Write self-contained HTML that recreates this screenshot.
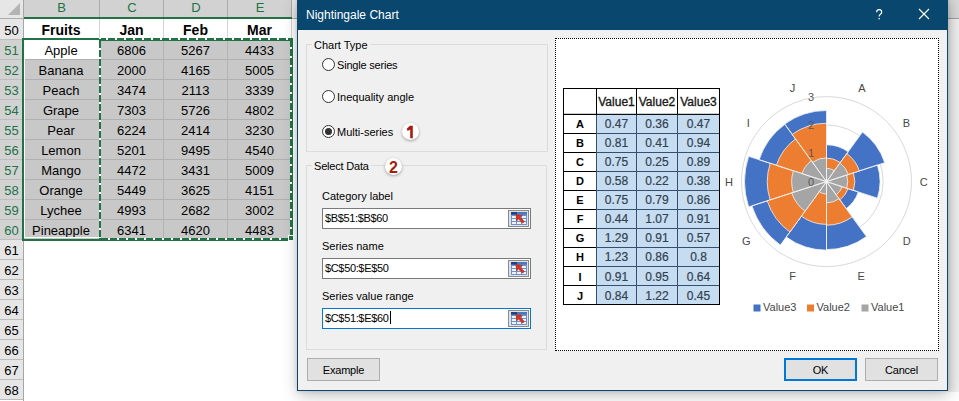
<!DOCTYPE html><html><head><meta charset="utf-8"><style>
*{margin:0;padding:0;box-sizing:border-box}
html,body{width:959px;height:401px;overflow:hidden;background:#fff;font-family:"Liberation Sans", sans-serif}
.a{position:absolute}
.xl{font-size:13px;color:#000;text-align:center;line-height:23px}
.rh{font-size:13px;text-align:center;line-height:23px}
.dt{font-size:11px;color:#000;white-space:nowrap}
</style></head><body>
<div class="a" style="left:0;top:0;width:959px;height:19px;background:#e6e6e6;border-bottom:1px solid #ababab"></div>
<svg class="a" style="left:0;top:0" width="23" height="18"><polygon points="20,3 20,15 8,15" fill="#b4b4b4"/></svg>
<div class="a" style="left:23px;top:0;width:77px;height:17px;background:#d2d2d2;border-right:1px solid #ababab"></div>
<div class="a rh" style="left:23px;top:-1px;width:77px;height:17px;color:#217346;line-height:18.5px;font-size:13px">B</div>
<div class="a" style="left:100px;top:0;width:64px;height:17px;background:#d2d2d2;border-right:1px solid #ababab"></div>
<div class="a rh" style="left:100px;top:-1px;width:64px;height:17px;color:#217346;line-height:18.5px;font-size:13px">C</div>
<div class="a" style="left:164px;top:0;width:64px;height:17px;background:#d2d2d2;border-right:1px solid #ababab"></div>
<div class="a rh" style="left:164px;top:-1px;width:64px;height:17px;color:#217346;line-height:18.5px;font-size:13px">D</div>
<div class="a" style="left:228px;top:0;width:64px;height:17px;background:#d2d2d2;border-right:1px solid #ababab"></div>
<div class="a rh" style="left:228px;top:-1px;width:64px;height:17px;color:#217346;line-height:18.5px;font-size:13px">E</div>
<div class="a" style="left:23px;top:17px;width:269px;height:2px;background:#217346"></div>
<div class="a rh" style="left:0;top:19px;width:23px;height:21px;background:#e6e6e6;border-bottom:1px solid #bdbdbd;color:#000;line-height:23px">50</div>
<div class="a rh" style="left:0;top:40px;width:23px;height:20px;background:#d2d2d2;border-bottom:1px solid #bdbdbd;color:#217346;line-height:21px">51</div>
<div class="a rh" style="left:0;top:60px;width:23px;height:20px;background:#d2d2d2;border-bottom:1px solid #bdbdbd;color:#217346;line-height:21px">52</div>
<div class="a rh" style="left:0;top:80px;width:23px;height:20px;background:#d2d2d2;border-bottom:1px solid #bdbdbd;color:#217346;line-height:21px">53</div>
<div class="a rh" style="left:0;top:100px;width:23px;height:20px;background:#d2d2d2;border-bottom:1px solid #bdbdbd;color:#217346;line-height:21px">54</div>
<div class="a rh" style="left:0;top:120px;width:23px;height:20px;background:#d2d2d2;border-bottom:1px solid #bdbdbd;color:#217346;line-height:21px">55</div>
<div class="a rh" style="left:0;top:140px;width:23px;height:20px;background:#d2d2d2;border-bottom:1px solid #bdbdbd;color:#217346;line-height:21px">56</div>
<div class="a rh" style="left:0;top:160px;width:23px;height:20px;background:#d2d2d2;border-bottom:1px solid #bdbdbd;color:#217346;line-height:21px">57</div>
<div class="a rh" style="left:0;top:180px;width:23px;height:20px;background:#d2d2d2;border-bottom:1px solid #bdbdbd;color:#217346;line-height:21px">58</div>
<div class="a rh" style="left:0;top:200px;width:23px;height:20px;background:#d2d2d2;border-bottom:1px solid #bdbdbd;color:#217346;line-height:21px">59</div>
<div class="a rh" style="left:0;top:220px;width:23px;height:20px;background:#d2d2d2;border-bottom:1px solid #bdbdbd;color:#217346;line-height:21px">60</div>
<div class="a rh" style="left:0;top:240px;width:23px;height:20px;background:#e6e6e6;border-bottom:1px solid #bdbdbd;color:#000;line-height:21px">61</div>
<div class="a rh" style="left:0;top:260px;width:23px;height:20px;background:#e6e6e6;border-bottom:1px solid #bdbdbd;color:#000;line-height:21px">62</div>
<div class="a rh" style="left:0;top:280px;width:23px;height:20px;background:#e6e6e6;border-bottom:1px solid #bdbdbd;color:#000;line-height:21px">63</div>
<div class="a rh" style="left:0;top:300px;width:23px;height:20px;background:#e6e6e6;border-bottom:1px solid #bdbdbd;color:#000;line-height:21px">64</div>
<div class="a rh" style="left:0;top:320px;width:23px;height:20px;background:#e6e6e6;border-bottom:1px solid #bdbdbd;color:#000;line-height:21px">65</div>
<div class="a rh" style="left:0;top:340px;width:23px;height:20px;background:#e6e6e6;border-bottom:1px solid #bdbdbd;color:#000;line-height:21px">66</div>
<div class="a rh" style="left:0;top:360px;width:23px;height:20px;background:#e6e6e6;border-bottom:1px solid #bdbdbd;color:#000;line-height:21px">67</div>
<div class="a rh" style="left:0;top:380px;width:23px;height:20px;background:#e6e6e6;border-bottom:1px solid #bdbdbd;color:#000;line-height:21px">68</div>
<div class="a" style="left:23px;top:0;width:1px;height:401px;background:#a6a6a6"></div>
<div class="a" style="left:24px;top:19px;width:268px;height:21px;background:#fff"></div>
<div class="a xl" style="left:23px;top:19px;width:77px;height:21px;font-weight:bold;font-size:14px;border-right:1px solid #d4d4d4">Fruits</div>
<div class="a xl" style="left:100px;top:19px;width:64px;height:21px;font-weight:bold;font-size:14px;border-right:1px solid #d4d4d4">Jan</div>
<div class="a xl" style="left:164px;top:19px;width:64px;height:21px;font-weight:bold;font-size:14px;border-right:1px solid #d4d4d4">Feb</div>
<div class="a xl" style="left:228px;top:19px;width:64px;height:21px;font-weight:bold;font-size:14px;border-right:1px solid #d4d4d4">Mar</div>
<div class="a xl" style="left:23px;top:40px;width:77px;height:20px;background:#fff;border-right:1px solid #b4b4b4;border-bottom:1px solid #b0b0b0;line-height:21px">Apple</div>
<div class="a xl" style="left:100px;top:40px;width:64px;height:20px;background:#c8c8c8;border-right:1px solid #b4b4b4;border-bottom:1px solid #b0b0b0;line-height:21px">6806</div>
<div class="a xl" style="left:164px;top:40px;width:64px;height:20px;background:#c8c8c8;border-right:1px solid #b4b4b4;border-bottom:1px solid #b0b0b0;line-height:21px">5267</div>
<div class="a xl" style="left:228px;top:40px;width:64px;height:20px;background:#c8c8c8;border-right:1px solid #b4b4b4;border-bottom:1px solid #b0b0b0;line-height:21px">4433</div>
<div class="a xl" style="left:23px;top:60px;width:77px;height:20px;background:#c8c8c8;border-right:1px solid #b4b4b4;border-bottom:1px solid #b0b0b0;line-height:21px">Banana</div>
<div class="a xl" style="left:100px;top:60px;width:64px;height:20px;background:#c8c8c8;border-right:1px solid #b4b4b4;border-bottom:1px solid #b0b0b0;line-height:21px">2000</div>
<div class="a xl" style="left:164px;top:60px;width:64px;height:20px;background:#c8c8c8;border-right:1px solid #b4b4b4;border-bottom:1px solid #b0b0b0;line-height:21px">4165</div>
<div class="a xl" style="left:228px;top:60px;width:64px;height:20px;background:#c8c8c8;border-right:1px solid #b4b4b4;border-bottom:1px solid #b0b0b0;line-height:21px">5005</div>
<div class="a xl" style="left:23px;top:80px;width:77px;height:20px;background:#c8c8c8;border-right:1px solid #b4b4b4;border-bottom:1px solid #b0b0b0;line-height:21px">Peach</div>
<div class="a xl" style="left:100px;top:80px;width:64px;height:20px;background:#c8c8c8;border-right:1px solid #b4b4b4;border-bottom:1px solid #b0b0b0;line-height:21px">3474</div>
<div class="a xl" style="left:164px;top:80px;width:64px;height:20px;background:#c8c8c8;border-right:1px solid #b4b4b4;border-bottom:1px solid #b0b0b0;line-height:21px">2113</div>
<div class="a xl" style="left:228px;top:80px;width:64px;height:20px;background:#c8c8c8;border-right:1px solid #b4b4b4;border-bottom:1px solid #b0b0b0;line-height:21px">3339</div>
<div class="a xl" style="left:23px;top:100px;width:77px;height:20px;background:#c8c8c8;border-right:1px solid #b4b4b4;border-bottom:1px solid #b0b0b0;line-height:21px">Grape</div>
<div class="a xl" style="left:100px;top:100px;width:64px;height:20px;background:#c8c8c8;border-right:1px solid #b4b4b4;border-bottom:1px solid #b0b0b0;line-height:21px">7303</div>
<div class="a xl" style="left:164px;top:100px;width:64px;height:20px;background:#c8c8c8;border-right:1px solid #b4b4b4;border-bottom:1px solid #b0b0b0;line-height:21px">5726</div>
<div class="a xl" style="left:228px;top:100px;width:64px;height:20px;background:#c8c8c8;border-right:1px solid #b4b4b4;border-bottom:1px solid #b0b0b0;line-height:21px">4802</div>
<div class="a xl" style="left:23px;top:120px;width:77px;height:20px;background:#c8c8c8;border-right:1px solid #b4b4b4;border-bottom:1px solid #b0b0b0;line-height:21px">Pear</div>
<div class="a xl" style="left:100px;top:120px;width:64px;height:20px;background:#c8c8c8;border-right:1px solid #b4b4b4;border-bottom:1px solid #b0b0b0;line-height:21px">6224</div>
<div class="a xl" style="left:164px;top:120px;width:64px;height:20px;background:#c8c8c8;border-right:1px solid #b4b4b4;border-bottom:1px solid #b0b0b0;line-height:21px">2414</div>
<div class="a xl" style="left:228px;top:120px;width:64px;height:20px;background:#c8c8c8;border-right:1px solid #b4b4b4;border-bottom:1px solid #b0b0b0;line-height:21px">3230</div>
<div class="a xl" style="left:23px;top:140px;width:77px;height:20px;background:#c8c8c8;border-right:1px solid #b4b4b4;border-bottom:1px solid #b0b0b0;line-height:21px">Lemon</div>
<div class="a xl" style="left:100px;top:140px;width:64px;height:20px;background:#c8c8c8;border-right:1px solid #b4b4b4;border-bottom:1px solid #b0b0b0;line-height:21px">5201</div>
<div class="a xl" style="left:164px;top:140px;width:64px;height:20px;background:#c8c8c8;border-right:1px solid #b4b4b4;border-bottom:1px solid #b0b0b0;line-height:21px">9495</div>
<div class="a xl" style="left:228px;top:140px;width:64px;height:20px;background:#c8c8c8;border-right:1px solid #b4b4b4;border-bottom:1px solid #b0b0b0;line-height:21px">4540</div>
<div class="a xl" style="left:23px;top:160px;width:77px;height:20px;background:#c8c8c8;border-right:1px solid #b4b4b4;border-bottom:1px solid #b0b0b0;line-height:21px">Mango</div>
<div class="a xl" style="left:100px;top:160px;width:64px;height:20px;background:#c8c8c8;border-right:1px solid #b4b4b4;border-bottom:1px solid #b0b0b0;line-height:21px">4472</div>
<div class="a xl" style="left:164px;top:160px;width:64px;height:20px;background:#c8c8c8;border-right:1px solid #b4b4b4;border-bottom:1px solid #b0b0b0;line-height:21px">3431</div>
<div class="a xl" style="left:228px;top:160px;width:64px;height:20px;background:#c8c8c8;border-right:1px solid #b4b4b4;border-bottom:1px solid #b0b0b0;line-height:21px">5009</div>
<div class="a xl" style="left:23px;top:180px;width:77px;height:20px;background:#c8c8c8;border-right:1px solid #b4b4b4;border-bottom:1px solid #b0b0b0;line-height:21px">Orange</div>
<div class="a xl" style="left:100px;top:180px;width:64px;height:20px;background:#c8c8c8;border-right:1px solid #b4b4b4;border-bottom:1px solid #b0b0b0;line-height:21px">5449</div>
<div class="a xl" style="left:164px;top:180px;width:64px;height:20px;background:#c8c8c8;border-right:1px solid #b4b4b4;border-bottom:1px solid #b0b0b0;line-height:21px">3625</div>
<div class="a xl" style="left:228px;top:180px;width:64px;height:20px;background:#c8c8c8;border-right:1px solid #b4b4b4;border-bottom:1px solid #b0b0b0;line-height:21px">4151</div>
<div class="a xl" style="left:23px;top:200px;width:77px;height:20px;background:#c8c8c8;border-right:1px solid #b4b4b4;border-bottom:1px solid #b0b0b0;line-height:21px">Lychee</div>
<div class="a xl" style="left:100px;top:200px;width:64px;height:20px;background:#c8c8c8;border-right:1px solid #b4b4b4;border-bottom:1px solid #b0b0b0;line-height:21px">4993</div>
<div class="a xl" style="left:164px;top:200px;width:64px;height:20px;background:#c8c8c8;border-right:1px solid #b4b4b4;border-bottom:1px solid #b0b0b0;line-height:21px">2682</div>
<div class="a xl" style="left:228px;top:200px;width:64px;height:20px;background:#c8c8c8;border-right:1px solid #b4b4b4;border-bottom:1px solid #b0b0b0;line-height:21px">3002</div>
<div class="a xl" style="left:23px;top:220px;width:77px;height:20px;background:#c8c8c8;border-right:1px solid #b4b4b4;border-bottom:1px solid #b0b0b0;line-height:21px">Pineapple</div>
<div class="a xl" style="left:100px;top:220px;width:64px;height:20px;background:#c8c8c8;border-right:1px solid #b4b4b4;border-bottom:1px solid #b0b0b0;line-height:21px">6341</div>
<div class="a xl" style="left:164px;top:220px;width:64px;height:20px;background:#c8c8c8;border-right:1px solid #b4b4b4;border-bottom:1px solid #b0b0b0;line-height:21px">4620</div>
<div class="a xl" style="left:228px;top:220px;width:64px;height:20px;background:#c8c8c8;border-right:1px solid #b4b4b4;border-bottom:1px solid #b0b0b0;line-height:21px">4483</div>
<div class="a" style="left:24px;top:40px;width:75px;height:198px;border-left:1px solid #fff;border-bottom:1px solid #fff"></div>
<div class="a" style="left:22px;top:38px;width:79px;height:203px;border:2px solid #217346"></div>
<div class="a" style="left:99px;top:38px;width:194px;height:3px;background:#217346"></div>
<div class="a" style="left:99px;top:38px;width:192px;height:2px;background:repeating-linear-gradient(90deg,transparent 0 7px,#fff 7px 9px)"></div>
<div class="a" style="left:99px;top:238px;width:194px;height:3px;background:#217346"></div>
<div class="a" style="left:101px;top:238px;width:188px;height:2px;background:repeating-linear-gradient(90deg,transparent 0 7px,#fff 7px 9px)"></div>
<div class="a" style="left:99px;top:38px;width:2px;height:200px;background:repeating-linear-gradient(180deg,#217346 0 7px,#fff 7px 9px);background-position:0 3px"></div>
<div class="a" style="left:290px;top:38px;width:3px;height:200px;background:#217346"></div>
<div class="a" style="left:290px;top:40px;width:2px;height:196px;background:repeating-linear-gradient(180deg,transparent 0 7px,#fff 7px 9px)"></div>
<div class="a" style="left:288px;top:235px;width:6px;height:6px;background:#217346;border:1px solid #fff"></div>
<div class="a" style="left:948px;top:19px;width:11px;height:382px;background:#fff"></div>
<div class="a" style="left:948px;top:0;width:11px;height:392px;background:linear-gradient(90deg,rgba(0,0,0,0.09),rgba(0,0,0,0.05))"></div>
<div class="a" style="left:297px;top:0;width:651px;height:391px;box-shadow:0 0 4px rgba(0,0,0,0.14), 1px 4px 15px rgba(0,0,0,0.26)"></div>
<div class="a" style="left:297px;top:0;width:651px;height:391px;background:#f0f0f0;border:1px solid #09476e;border-top:none"></div>
<div class="a" style="left:297px;top:0;width:651px;height:30px;background:#09476e"></div>
<div class="a" style="left:306px;top:7px;font-size:12px;color:#fff;white-space:nowrap;line-height:16px">Nightingale Chart</div>
<svg class="a" style="left:0;top:0" width="959" height="30"><path d="M876.6,12.2 Q876.6,9.6 879.2,9.6 Q881.7,9.6 881.7,12 Q881.7,13.5 880.2,14.4 Q879.1,15.1 879.1,16.6" fill="none" stroke="#fff" stroke-width="1.15"/><rect x="878.5" y="18" width="1.3" height="1.3" fill="#fff"/></svg>
<svg class="a" style="left:918px;top:8px" width="12" height="12"><path d="M1,1L11,11M11,1L1,11" stroke="#fff" stroke-width="1.1"/></svg>
<div class="a" style="left:306px;top:44px;width:242px;height:108px;border:1px solid #dcdcdc"></div>
<div class="a dt" style="left:312px;top:38px;padding:0 2px;background:#f0f0f0;line-height:14px">Chart Type</div>
<div class="a" style="left:306px;top:165px;width:241px;height:185px;border:1px solid #dcdcdc"></div>
<div class="a dt" style="left:312px;top:159px;padding:0 2px;background:#f0f0f0;line-height:14px;letter-spacing:-0.2px">Select Data</div>
<div class="a" style="left:322px;top:58.0px;width:13px;height:13px;border-radius:50%;border:1px solid #333;background:#fff"></div>
<div class="a dt" style="left:337px;top:57.5px;line-height:14px;letter-spacing:-0.2px">Single series</div>
<div class="a" style="left:322px;top:90.0px;width:13px;height:13px;border-radius:50%;border:1px solid #333;background:#fff"></div>
<div class="a dt" style="left:337px;top:89.5px;line-height:14px;letter-spacing:0px">Inequality angle</div>
<div class="a" style="left:322px;top:124.5px;width:13px;height:13px;border-radius:50%;border:1px solid #333;background:#fff"></div>
<div class="a" style="left:325px;top:127.5px;width:7px;height:7px;border-radius:50%;background:#333"></div>
<div class="a dt" style="left:337px;top:125px;line-height:14px;letter-spacing:0px">Multi-series</div>
<div class="a" style="left:401.6px;top:122.9px;width:17.4px;height:17.4px;border-radius:50%;background:#fff;box-shadow:0 1px 3px rgba(0,0,0,0.35)"></div>
<svg class="a" style="left:0;top:0" width="959" height="401"><path d="M409.9,125.8 L412.8,125.8 L412.8,138.2 L410.2,138.2 L410.2,129.4 L407.6,131.0 L406.8,128.8 Z" fill="#a81c10"/></svg>
<div class="a" style="left:384.6px;top:157.6px;width:17.4px;height:17.4px;border-radius:50%;background:#fff;box-shadow:0 1px 3px rgba(0,0,0,0.35)"></div>
<div class="a" style="left:383px;top:158px;width:21px;text-align:center;font-weight:bold;font-size:16px;line-height:19px;color:#a81c10">2</div>
<div class="a dt" style="left:322px;top:189px;line-height:14px">Category label</div>
<div class="a" style="left:322px;top:208px;width:209px;height:21px;background:#fff;border:1px solid #7a7a7a"></div>
<div class="a dt" style="left:325px;top:211px;line-height:14px;letter-spacing:-0.35px">$B$51:$B$60</div>
<div class="a" style="left:508px;top:210px;width:21px;height:17px;background:#e1e1e1;border:1px solid #8a8a8a"></div>
<svg class="a" style="left:511px;top:212px" width="16" height="13"><rect x="0" y="0" width="16" height="13" fill="#6d93cf"/><rect x="0" y="0" width="16" height="2.5" fill="#4a78c0"/><rect x="0" y="0" width="6" height="2.5" fill="#23407a"/><path d="M1,4h4v2h-4zM6,4h4v2h-4zM11,4h4v2h-4zM1,7h4v2h-4zM6,7h4v2h-4zM11,7h4v2h-4zM1,10h4v2h-4zM6,10h4v2h-4zM11,10h4v2h-4z" fill="#eef3fb"/><path d="M5,2.6 L11.2,3.4 L9.3,5.3 L13.4,9.4 L11.6,11.2 L7.5,7.1 L5.7,8.9 Z" fill="#d8321c" stroke="#a8200f" stroke-width="0.5"/></svg>
<div class="a dt" style="left:322px;top:239px;line-height:14px">Series name</div>
<div class="a" style="left:322px;top:258px;width:209px;height:21px;background:#fff;border:1px solid #7a7a7a"></div>
<div class="a dt" style="left:325px;top:261px;line-height:14px;letter-spacing:-0.35px">$C$50:$E$50</div>
<div class="a" style="left:508px;top:260px;width:21px;height:17px;background:#e1e1e1;border:1px solid #8a8a8a"></div>
<svg class="a" style="left:511px;top:262px" width="16" height="13"><rect x="0" y="0" width="16" height="13" fill="#6d93cf"/><rect x="0" y="0" width="16" height="2.5" fill="#4a78c0"/><rect x="0" y="0" width="6" height="2.5" fill="#23407a"/><path d="M1,4h4v2h-4zM6,4h4v2h-4zM11,4h4v2h-4zM1,7h4v2h-4zM6,7h4v2h-4zM11,7h4v2h-4zM1,10h4v2h-4zM6,10h4v2h-4zM11,10h4v2h-4z" fill="#eef3fb"/><path d="M5,2.6 L11.2,3.4 L9.3,5.3 L13.4,9.4 L11.6,11.2 L7.5,7.1 L5.7,8.9 Z" fill="#d8321c" stroke="#a8200f" stroke-width="0.5"/></svg>
<div class="a dt" style="left:322px;top:289px;line-height:14px">Series value range</div>
<div class="a" style="left:322px;top:308px;width:209px;height:21px;background:#fff;border:1px solid #0078d7"></div>
<div class="a dt" style="left:325px;top:311px;line-height:14px;letter-spacing:-0.35px">$C$51:$E$60</div>
<div class="a" style="left:390px;top:311px;width:1px;height:13px;background:#000"></div>
<div class="a" style="left:508px;top:310px;width:21px;height:17px;background:#e1e1e1;border:1px solid #8a8a8a"></div>
<svg class="a" style="left:511px;top:312px" width="16" height="13"><rect x="0" y="0" width="16" height="13" fill="#6d93cf"/><rect x="0" y="0" width="16" height="2.5" fill="#4a78c0"/><rect x="0" y="0" width="6" height="2.5" fill="#23407a"/><path d="M1,4h4v2h-4zM6,4h4v2h-4zM11,4h4v2h-4zM1,7h4v2h-4zM6,7h4v2h-4zM11,7h4v2h-4zM1,10h4v2h-4zM6,10h4v2h-4zM11,10h4v2h-4z" fill="#eef3fb"/><path d="M5,2.6 L11.2,3.4 L9.3,5.3 L13.4,9.4 L11.6,11.2 L7.5,7.1 L5.7,8.9 Z" fill="#d8321c" stroke="#a8200f" stroke-width="0.5"/></svg>
<div class="a" style="left:307px;top:358px;width:73px;height:23px;background:#e1e1e1;border:1px solid #adadad"></div>
<div class="a dt" style="left:307px;top:363px;width:73px;text-align:center;line-height:14px;letter-spacing:-0.2px">Example</div>
<div class="a" style="left:784px;top:358px;width:73px;height:23px;background:#e1e1e1;border:2px solid #0078d7"></div>
<div class="a dt" style="left:784px;top:363px;width:73px;text-align:center;line-height:14px;letter-spacing:-0.2px">OK</div>
<div class="a" style="left:865px;top:358px;width:73px;height:23px;background:#e1e1e1;border:1px solid #adadad"></div>
<div class="a dt" style="left:865px;top:363px;width:73px;text-align:center;line-height:14px;letter-spacing:-0.2px">Cancel</div>
<div class="a" style="left:555px;top:38px;width:384px;height:313px;background:#fff;border:1px dotted #000"></div>
<svg class="a" style="left:0;top:0" width="959" height="401"><rect x="596" y="114.3" width="123" height="190.2" fill="#c5dcf1"/><line x1="596.5" y1="114.3" x2="596.5" y2="304.5" stroke="#35506e" stroke-width="1"/><line x1="636.5" y1="114.3" x2="636.5" y2="304.5" stroke="#35506e" stroke-width="1"/><line x1="677.5" y1="114.3" x2="677.5" y2="304.5" stroke="#35506e" stroke-width="1"/><line x1="719.5" y1="114.3" x2="719.5" y2="304.5" stroke="#35506e" stroke-width="1"/><line x1="596" y1="114.5" x2="720" y2="114.5" stroke="#35506e" stroke-width="1"/><line x1="563" y1="114.5" x2="596" y2="114.5" stroke="#000" stroke-width="1"/><line x1="596" y1="133.5" x2="720" y2="133.5" stroke="#35506e" stroke-width="1"/><line x1="563" y1="133.5" x2="596" y2="133.5" stroke="#000" stroke-width="1"/><line x1="596" y1="152.5" x2="720" y2="152.5" stroke="#35506e" stroke-width="1"/><line x1="563" y1="152.5" x2="596" y2="152.5" stroke="#000" stroke-width="1"/><line x1="596" y1="171.5" x2="720" y2="171.5" stroke="#35506e" stroke-width="1"/><line x1="563" y1="171.5" x2="596" y2="171.5" stroke="#000" stroke-width="1"/><line x1="596" y1="190.5" x2="720" y2="190.5" stroke="#35506e" stroke-width="1"/><line x1="563" y1="190.5" x2="596" y2="190.5" stroke="#000" stroke-width="1"/><line x1="596" y1="209.5" x2="720" y2="209.5" stroke="#35506e" stroke-width="1"/><line x1="563" y1="209.5" x2="596" y2="209.5" stroke="#000" stroke-width="1"/><line x1="596" y1="228.5" x2="720" y2="228.5" stroke="#35506e" stroke-width="1"/><line x1="563" y1="228.5" x2="596" y2="228.5" stroke="#000" stroke-width="1"/><line x1="596" y1="247.5" x2="720" y2="247.5" stroke="#35506e" stroke-width="1"/><line x1="563" y1="247.5" x2="596" y2="247.5" stroke="#000" stroke-width="1"/><line x1="596" y1="266.5" x2="720" y2="266.5" stroke="#35506e" stroke-width="1"/><line x1="563" y1="266.5" x2="596" y2="266.5" stroke="#000" stroke-width="1"/><line x1="596" y1="285.5" x2="720" y2="285.5" stroke="#35506e" stroke-width="1"/><line x1="563" y1="285.5" x2="596" y2="285.5" stroke="#000" stroke-width="1"/><line x1="596" y1="304.5" x2="720" y2="304.5" stroke="#35506e" stroke-width="1"/><line x1="563" y1="304.5" x2="596" y2="304.5" stroke="#000" stroke-width="1"/><rect x="563.5" y="88.5" width="156" height="216" fill="none" stroke="#000"/><line x1="596.5" y1="88" x2="596.5" y2="114.3" stroke="#000"/><line x1="636.5" y1="88" x2="636.5" y2="114.3" stroke="#000"/><line x1="677.5" y1="88" x2="677.5" y2="114.3" stroke="#000"/><line x1="563" y1="114.3" x2="719" y2="114.3" stroke="#000"/><text x="616.5" y="106" text-anchor="middle" font-family="Liberation Sans" font-size="12" fill="#1a1a1a" stroke="#1a1a1a" stroke-width="0.35">Value1</text><text x="657.0" y="106" text-anchor="middle" font-family="Liberation Sans" font-size="12" fill="#1a1a1a" stroke="#1a1a1a" stroke-width="0.35">Value2</text><text x="698.5" y="106" text-anchor="middle" font-family="Liberation Sans" font-size="12" fill="#1a1a1a" stroke="#1a1a1a" stroke-width="0.35">Value3</text><text x="580.0" y="128.3" text-anchor="middle" font-family="Liberation Sans" font-size="11" font-weight="bold" fill="#000">A</text><text x="616.5" y="128.3" text-anchor="middle" font-family="Liberation Sans" font-size="12" fill="#33414f" stroke="#33414f" stroke-width="0.2">0.47</text><text x="657.0" y="128.3" text-anchor="middle" font-family="Liberation Sans" font-size="12" fill="#33414f" stroke="#33414f" stroke-width="0.2">0.36</text><text x="698.5" y="128.3" text-anchor="middle" font-family="Liberation Sans" font-size="12" fill="#33414f" stroke="#33414f" stroke-width="0.2">0.47</text><text x="580.0" y="147.3" text-anchor="middle" font-family="Liberation Sans" font-size="11" font-weight="bold" fill="#000">B</text><text x="616.5" y="147.3" text-anchor="middle" font-family="Liberation Sans" font-size="12" fill="#33414f" stroke="#33414f" stroke-width="0.2">0.81</text><text x="657.0" y="147.3" text-anchor="middle" font-family="Liberation Sans" font-size="12" fill="#33414f" stroke="#33414f" stroke-width="0.2">0.41</text><text x="698.5" y="147.3" text-anchor="middle" font-family="Liberation Sans" font-size="12" fill="#33414f" stroke="#33414f" stroke-width="0.2">0.94</text><text x="580.0" y="166.3" text-anchor="middle" font-family="Liberation Sans" font-size="11" font-weight="bold" fill="#000">C</text><text x="616.5" y="166.3" text-anchor="middle" font-family="Liberation Sans" font-size="12" fill="#33414f" stroke="#33414f" stroke-width="0.2">0.75</text><text x="657.0" y="166.3" text-anchor="middle" font-family="Liberation Sans" font-size="12" fill="#33414f" stroke="#33414f" stroke-width="0.2">0.25</text><text x="698.5" y="166.3" text-anchor="middle" font-family="Liberation Sans" font-size="12" fill="#33414f" stroke="#33414f" stroke-width="0.2">0.89</text><text x="580.0" y="185.4" text-anchor="middle" font-family="Liberation Sans" font-size="11" font-weight="bold" fill="#000">D</text><text x="616.5" y="185.4" text-anchor="middle" font-family="Liberation Sans" font-size="12" fill="#33414f" stroke="#33414f" stroke-width="0.2">0.58</text><text x="657.0" y="185.4" text-anchor="middle" font-family="Liberation Sans" font-size="12" fill="#33414f" stroke="#33414f" stroke-width="0.2">0.22</text><text x="698.5" y="185.4" text-anchor="middle" font-family="Liberation Sans" font-size="12" fill="#33414f" stroke="#33414f" stroke-width="0.2">0.38</text><text x="580.0" y="204.4" text-anchor="middle" font-family="Liberation Sans" font-size="11" font-weight="bold" fill="#000">E</text><text x="616.5" y="204.4" text-anchor="middle" font-family="Liberation Sans" font-size="12" fill="#33414f" stroke="#33414f" stroke-width="0.2">0.75</text><text x="657.0" y="204.4" text-anchor="middle" font-family="Liberation Sans" font-size="12" fill="#33414f" stroke="#33414f" stroke-width="0.2">0.79</text><text x="698.5" y="204.4" text-anchor="middle" font-family="Liberation Sans" font-size="12" fill="#33414f" stroke="#33414f" stroke-width="0.2">0.86</text><text x="580.0" y="223.4" text-anchor="middle" font-family="Liberation Sans" font-size="11" font-weight="bold" fill="#000">F</text><text x="616.5" y="223.4" text-anchor="middle" font-family="Liberation Sans" font-size="12" fill="#33414f" stroke="#33414f" stroke-width="0.2">0.44</text><text x="657.0" y="223.4" text-anchor="middle" font-family="Liberation Sans" font-size="12" fill="#33414f" stroke="#33414f" stroke-width="0.2">1.07</text><text x="698.5" y="223.4" text-anchor="middle" font-family="Liberation Sans" font-size="12" fill="#33414f" stroke="#33414f" stroke-width="0.2">0.91</text><text x="580.0" y="242.4" text-anchor="middle" font-family="Liberation Sans" font-size="11" font-weight="bold" fill="#000">G</text><text x="616.5" y="242.4" text-anchor="middle" font-family="Liberation Sans" font-size="12" fill="#33414f" stroke="#33414f" stroke-width="0.2">1.29</text><text x="657.0" y="242.4" text-anchor="middle" font-family="Liberation Sans" font-size="12" fill="#33414f" stroke="#33414f" stroke-width="0.2">0.91</text><text x="698.5" y="242.4" text-anchor="middle" font-family="Liberation Sans" font-size="12" fill="#33414f" stroke="#33414f" stroke-width="0.2">0.57</text><text x="580.0" y="261.4" text-anchor="middle" font-family="Liberation Sans" font-size="11" font-weight="bold" fill="#000">H</text><text x="616.5" y="261.4" text-anchor="middle" font-family="Liberation Sans" font-size="12" fill="#33414f" stroke="#33414f" stroke-width="0.2">1.23</text><text x="657.0" y="261.4" text-anchor="middle" font-family="Liberation Sans" font-size="12" fill="#33414f" stroke="#33414f" stroke-width="0.2">0.86</text><text x="698.5" y="261.4" text-anchor="middle" font-family="Liberation Sans" font-size="12" fill="#33414f" stroke="#33414f" stroke-width="0.2">0.8</text><text x="580.0" y="280.5" text-anchor="middle" font-family="Liberation Sans" font-size="11" font-weight="bold" fill="#000">I</text><text x="616.5" y="280.5" text-anchor="middle" font-family="Liberation Sans" font-size="12" fill="#33414f" stroke="#33414f" stroke-width="0.2">0.91</text><text x="657.0" y="280.5" text-anchor="middle" font-family="Liberation Sans" font-size="12" fill="#33414f" stroke="#33414f" stroke-width="0.2">0.95</text><text x="698.5" y="280.5" text-anchor="middle" font-family="Liberation Sans" font-size="12" fill="#33414f" stroke="#33414f" stroke-width="0.2">0.64</text><text x="580.0" y="299.5" text-anchor="middle" font-family="Liberation Sans" font-size="11" font-weight="bold" fill="#000">J</text><text x="616.5" y="299.5" text-anchor="middle" font-family="Liberation Sans" font-size="12" fill="#33414f" stroke="#33414f" stroke-width="0.2">0.84</text><text x="657.0" y="299.5" text-anchor="middle" font-family="Liberation Sans" font-size="12" fill="#33414f" stroke="#33414f" stroke-width="0.2">1.22</text><text x="698.5" y="299.5" text-anchor="middle" font-family="Liberation Sans" font-size="12" fill="#33414f" stroke="#33414f" stroke-width="0.2">0.45</text><circle cx="826.5" cy="181.6" r="28.33" fill="none" stroke="#d9d9d9" stroke-width="1"/><circle cx="826.5" cy="181.6" r="56.66" fill="none" stroke="#d9d9d9" stroke-width="1"/><circle cx="826.5" cy="181.6" r="84.99" fill="none" stroke="#d9d9d9" stroke-width="1"/><path d="M826.5,181.6L826.50,144.77A36.83,36.83 0 0 1 848.15,151.80ZM826.5,181.6L862.47,132.09A61.19,61.19 0 0 1 884.70,162.69ZM826.5,181.6L877.42,165.05A53.54,53.54 0 0 1 877.42,198.15ZM826.5,181.6L858.29,191.93A33.43,33.43 0 0 1 846.15,208.64ZM826.5,181.6L866.46,236.61A67.99,67.99 0 0 1 826.50,249.59ZM826.5,181.6L826.50,250.16A68.56,68.56 0 0 1 786.20,237.07ZM826.5,181.6L780.37,245.09A78.47,78.47 0 0 1 751.87,205.85ZM826.5,181.6L748.63,206.90A81.87,81.87 0 0 1 748.63,156.30ZM826.5,181.6L759.14,159.71A70.82,70.82 0 0 1 784.87,124.30ZM826.5,181.6L784.70,124.07A71.11,71.11 0 0 1 826.50,110.49Z" fill="#4472c4" stroke="#f4f4f4" stroke-width="0.8"/><path d="M826.5,181.6L826.50,158.09A23.51,23.51 0 0 1 840.32,162.58ZM826.5,181.6L846.82,153.64A34.56,34.56 0 0 1 859.37,170.92ZM826.5,181.6L853.44,172.85A28.33,28.33 0 0 1 853.44,190.35ZM826.5,181.6L848.05,188.60A22.66,22.66 0 0 1 839.82,199.94ZM826.5,181.6L852.14,216.90A43.63,43.63 0 0 1 826.50,225.23ZM826.5,181.6L826.50,224.38A42.78,42.78 0 0 1 801.36,216.21ZM826.5,181.6L789.87,232.02A62.33,62.33 0 0 1 767.22,200.86ZM826.5,181.6L770.19,199.90A59.21,59.21 0 0 1 770.19,163.30ZM826.5,181.6L776.39,165.32A52.69,52.69 0 0 1 795.53,138.97ZM826.5,181.6L792.20,134.39A58.36,58.36 0 0 1 826.50,123.24Z" fill="#ed7d31" stroke="#f4f4f4" stroke-width="0.8"/><path d="M826.5,181.6L826.50,168.28A13.32,13.32 0 0 1 834.33,170.83ZM826.5,181.6L839.99,163.04A22.95,22.95 0 0 1 848.32,174.51ZM826.5,181.6L846.71,175.03A21.25,21.25 0 0 1 846.71,188.17ZM826.5,181.6L842.13,186.68A16.43,16.43 0 0 1 836.16,194.89ZM826.5,181.6L838.99,198.79A21.25,21.25 0 0 1 826.50,202.85ZM826.5,181.6L826.50,194.07A12.47,12.47 0 0 1 819.17,191.68ZM826.5,181.6L805.02,211.17A36.55,36.55 0 0 1 791.74,192.89ZM826.5,181.6L793.36,192.37A34.85,34.85 0 0 1 793.36,170.83ZM826.5,181.6L801.98,173.63A25.78,25.78 0 0 1 811.35,160.74ZM826.5,181.6L812.51,162.35A23.80,23.80 0 0 1 826.50,157.80Z" fill="#a5a5a5" stroke="#f4f4f4" stroke-width="0.8"/><text x="814" y="185.8" text-anchor="end" font-family="Liberation Sans" font-size="11" fill="#595959">0</text><text x="814" y="157.0" text-anchor="end" font-family="Liberation Sans" font-size="11" fill="#595959">1</text><text x="814" y="128.8" text-anchor="end" font-family="Liberation Sans" font-size="11" fill="#595959">2</text><text x="814" y="100.8" text-anchor="end" font-family="Liberation Sans" font-size="11" fill="#595959">3</text><text x="792.5" y="92.0" text-anchor="middle" font-family="Liberation Sans" font-size="11" fill="#474747">J</text><text x="861.8" y="92.2" text-anchor="middle" font-family="Liberation Sans" font-size="11" fill="#474747">A</text><text x="906.5" y="127.4" text-anchor="middle" font-family="Liberation Sans" font-size="11" fill="#474747">B</text><text x="923.7" y="186.2" text-anchor="middle" font-family="Liberation Sans" font-size="11" fill="#474747">C</text><text x="906.7" y="245.4" text-anchor="middle" font-family="Liberation Sans" font-size="11" fill="#474747">D</text><text x="861.2" y="280.0" text-anchor="middle" font-family="Liberation Sans" font-size="11" fill="#474747">E</text><text x="792.5" y="280.0" text-anchor="middle" font-family="Liberation Sans" font-size="11" fill="#474747">F</text><text x="746.2" y="245.4" text-anchor="middle" font-family="Liberation Sans" font-size="11" fill="#474747">G</text><text x="729" y="186.2" text-anchor="middle" font-family="Liberation Sans" font-size="11" fill="#474747">H</text><text x="748.3" y="126.8" text-anchor="middle" font-family="Liberation Sans" font-size="11" fill="#474747">I</text><rect x="753.5" y="304.5" width="7" height="7" fill="#4472c4"/><text x="763.0" y="311" font-family="Liberation Sans" font-size="11" fill="#474747">Value3</text><rect x="807" y="304.5" width="7" height="7" fill="#ed7d31"/><text x="816.5" y="311" font-family="Liberation Sans" font-size="11" fill="#474747">Value2</text><rect x="861.5" y="304.5" width="7" height="7" fill="#a5a5a5"/><text x="871.0" y="311" font-family="Liberation Sans" font-size="11" fill="#474747">Value1</text></svg>
</body></html>
